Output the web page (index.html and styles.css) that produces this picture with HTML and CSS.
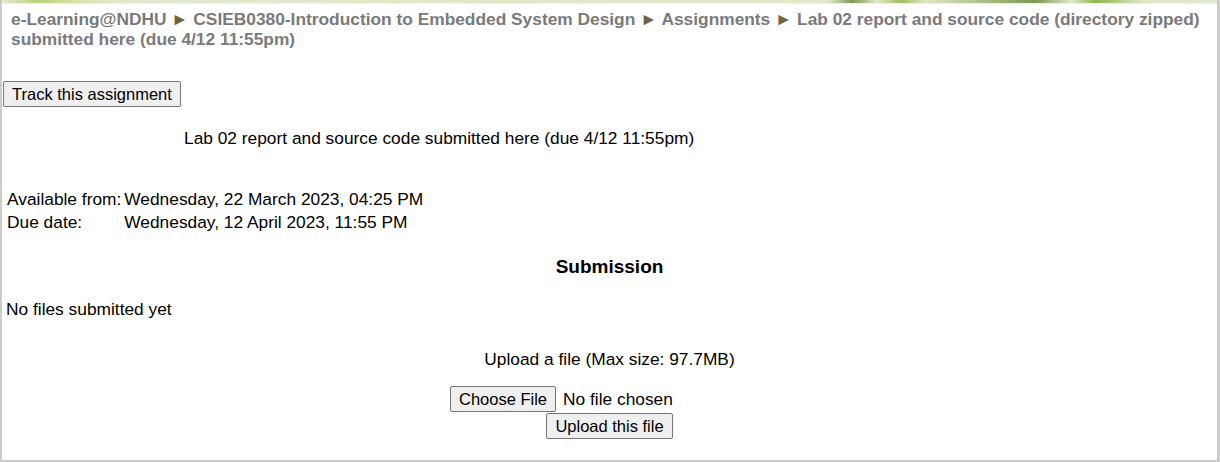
FILE: index.html
```html
<!DOCTYPE html>
<html lang="en">
<head>
<meta charset="utf-8">
<title>Lab 02 report and source code</title>
<link rel="stylesheet" href="styles.css">
</head>
<body>
<div class="page">
  <div class="banner"></div>
  <div class="navbar">
    <a class="crumb">e-Learning@NDHU</a> <span class="sep">&#9658;</span>
    <a class="crumb">CSIEB0380-Introduction to Embedded System Design</a> <span class="sep">&#9658;</span>
    <a class="crumb">Assignments</a> <span class="sep">&#9658;</span>
    <span class="crumb">Lab 02 report and source code (directory zipped) submitted here (due 4/12 11:55pm)</span>
  </div>

  <div class="track"><button class="btn">Track this assignment</button></div>

  <div class="intro">Lab 02 report and source code submitted here (due 4/12 11:55pm)</div>

  <div class="dates">
    <div class="label">Available from:</div><div class="value">Wednesday, 22 March 2023, 04:25 PM</div>
    <div class="label">Due date:</div><div class="value">Wednesday, 12 April 2023, 11:55 PM</div>
  </div>

  <h2 class="heading">Submission</h2>

  <div class="nofiles">No files submitted yet</div>

  <div class="upload">
    <div class="upload-title">Upload a file (Max size: 97.7MB)</div>
    <div class="file-row">
      <div class="file-input"><button class="btn">Choose File</button><span class="file-name">No file chosen</span></div>
    </div>
    <div class="submit-row"><button class="btn">Upload this file</button></div>
  </div>
</div>
</body>
</html>
```

FILE: styles.css
```css
html, body {
  margin: 0;
  padding: 0;
  background: #fff;
}
body {
  font-family: "Liberation Sans", Arial, sans-serif;
  font-size: 17.33px;
  line-height: 20px;
  color: #000;
}
.page {
  box-sizing: border-box;
  width: 1220px;
  height: 462px;
  border-left: 2px solid #cccccc;
  border-right: 3px solid #cccccc;
  border-bottom: 2px solid #cccccc;
  overflow: hidden;
}
.banner {
  height: 3px;
  background: linear-gradient(90deg, #e3ebcd 0%, #b9d27a 3%, #d5e4a6 6%, #e2eace 10%, #dfe8c8 40%, #e1e9ca 68%, #7d9a52 70%, #e0e9c8 72%, #9fbf5d 74%, #dfe8c8 76%, #7a9a4e 85%, #dfe8c8 88%, #8fb84c 90%, #dfe8c8 94%, #e2eacd 100%);
  border-bottom: 1px solid #eef2e2;
}
.navbar {
  padding: 6px 4px 0 9px;
  font-weight: bold;
  line-height: 19.5px;
  color: #7a7a7a;
}
.crumb {
  color: #7a7a7a;
  text-decoration: none;
}
.sep {
  color: #6f6544;
}
.btn {
  font-family: "Liberation Sans", Arial, sans-serif;
  font-size: 16.5px;
  line-height: 20px;
  color: #000;
  background: #efefef;
  border: 1px solid #767676;
  border-radius: 2px;
  padding: 2px 8px;
  margin: 0;
}
.track {
  margin-top: 32px;
  padding-left: 1px;
}
.intro {
  margin-top: 21px;
  padding-left: 182px;
}
.dates {
  margin-top: 41px;
  padding-left: 5px;
  display: grid;
  grid-template-columns: max-content max-content;
  column-gap: 3px;
  row-gap: 3px;
}
.heading {
  margin: 24px 0 0;
  font-size: 19px;
  line-height: 22px;
  font-weight: bold;
  text-align: center;
}
.nofiles {
  margin-top: 21px;
  padding-left: 4px;
}
.upload {
  margin-top: 30px;
  text-align: center;
}
.file-row {
  margin-top: 17px;
  display: flex;
  justify-content: center;
}
.file-input {
  width: 319px;
  display: flex;
  align-items: center;
}
.file-name {
  margin-left: 7px;
}
.submit-row {
  margin-top: 1px;
  display: flex;
  justify-content: center;
}
```
